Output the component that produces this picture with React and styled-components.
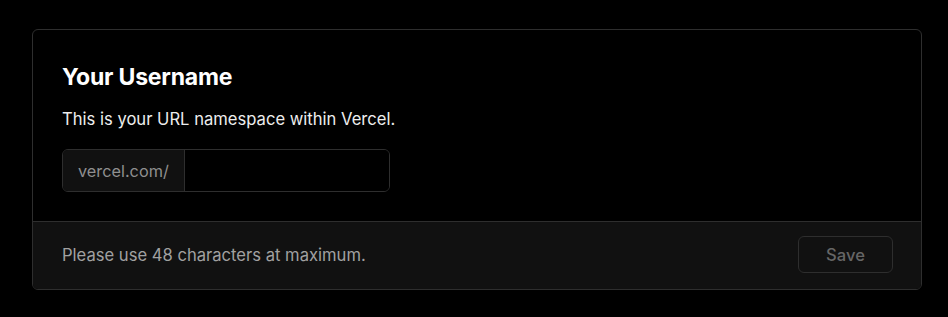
import styled, { createGlobalStyle } from 'styled-components';

const GlobalStyle = createGlobalStyle`
  html, body {
    margin: 0;
    padding: 0;
    background: #000;
  }
  body {
    font-family: Inter, "Noto Sans", sans-serif;
    color: #ededed;
    -webkit-font-smoothing: antialiased;
  }
`;

export default function App() {
  return (
    <>
      <GlobalStyle />
      <Page>
        <Card>
          <CardBody>
            <Title>Your Username</Title>
            <Description>This is your URL namespace within Vercel.</Description>
            <InputGroup>
              <Prefix>vercel.com/</Prefix>
              <Input type="text" aria-label="Username" />
            </InputGroup>
          </CardBody>
          <CardFooter>
            <Hint>Please use 48 characters at maximum.</Hint>
            <SaveButton disabled>Save</SaveButton>
          </CardFooter>
        </Card>
      </Page>
    </>
  );
}

const Page = styled.div`
  padding: 29px 26px 28px 32px;
`;

const Card = styled.section`
  border: 1px solid #2e2e2e;
  border-radius: 6px;
  overflow: hidden;
  background: #000;
`;

const CardBody = styled.div`
  padding: 31px 29px 28px;
  display: flex;
  flex-direction: column;
  height: 191px;
  box-sizing: border-box;
`;

const Title = styled.h2`
  margin: 0;
  font-size: 23px;
  line-height: 32px;
  font-weight: 700;
  color: #fff;
  letter-spacing: -0.2px;
`;

const Description = styled.p`
  margin: 14px 0 0;
  font-size: 16.6px;
  line-height: 24px;
  color: #ededed;
`;

const InputGroup = styled.div`
  margin-top: 18px;
  display: flex;
  width: 328px;
  height: 43px;
  box-sizing: border-box;
  border: 1px solid #2e2e2e;
  border-radius: 6px;
  overflow: hidden;
`;

const Prefix = styled.span`
  display: flex;
  align-items: center;
  padding: 0 15px;
  background: #111;
  color: #8f8f8f;
  font-size: 16.3px;
  border-right: 1px solid #2e2e2e;
`;

const Input = styled.input`
  flex: 1;
  min-width: 0;
  border: none;
  outline: none;
  background: #000;
  color: #ededed;
  font-family: inherit;
  font-size: 16px;
  padding: 0 12px;
`;

const CardFooter = styled.div`
  display: flex;
  align-items: center;
  justify-content: space-between;
  height: 68px;
  box-sizing: border-box;
  padding: 0 28px 2px 29px;
  background: #111;
  border-top: 1px solid #2e2e2e;
`;

const Hint = styled.p`
  margin: 0;
  font-size: 16.6px;
  color: #a1a1a1;
`;

const SaveButton = styled.button`
  width: 95px;
  height: 37px;
  border: 1px solid #2e2e2e;
  border-radius: 6px;
  background: #111;
  color: #666;
  font-family: inherit;
  font-size: 16.6px;
  font-weight: 500;
  cursor: not-allowed;
`;
